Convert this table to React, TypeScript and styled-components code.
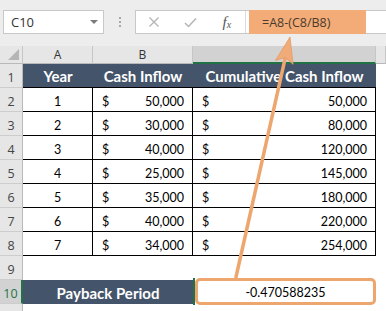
import React from "react";
import styled, { createGlobalStyle } from "styled-components";

const Global = createGlobalStyle`
  html, body { margin: 0; padding: 0; background: #ffffff; }
  body { width: 386px; height: 311px; overflow: hidden; font-family: Lato, "Liberation Sans", sans-serif; }
`;

const Page = styled.div`
  position: relative;
  width: 386px;
  height: 311px;
  overflow: hidden;
  background: #ffffff;
`;

const Toolbar = styled.div`
  height: 46px;
  box-sizing: border-box;
  padding: 10px 0 0 3px;
  display: flex;
  align-items: flex-start;
  background: #ededed;
`;

const NameBox = styled.div`
  width: 101px;
  height: 24px;
  box-sizing: border-box;
  background: #ffffff;
  border: 1px solid #c8c8c8;
  display: flex;
  align-items: center;
  justify-content: space-between;
  padding: 0 5px 0 7px;
  font-family: "Open Sans", sans-serif;
  font-size: 13px;
  color: #333;
`;

const Caret = styled.span`
  width: 0;
  height: 0;
  border-left: 4px solid transparent;
  border-right: 4px solid transparent;
  border-top: 4px solid #7a7a7a;
`;

const Dots = styled.div`
  width: 31px;
  height: 24px;
  display: flex;
  flex-direction: column;
  align-items: center;
  justify-content: center;
  gap: 2px;
  & > span {
    width: 2px;
    height: 2px;
    background: #a8a8a8;
  }
`;

const FormulaBox = styled.div`
  flex: 1;
  height: 24px;
  box-sizing: border-box;
  background: #ffffff;
  border: 1px solid #c8c8c8;
  border-right: none;
  display: flex;
  align-items: stretch;
`;

const IconZone = styled.div`
  width: 109px;
  display: flex;
  align-items: center;
  border-right: 1px solid #dadada;
`;

const IconSlot = styled.div`
  width: 37px;
  display: flex;
  justify-content: center;
  align-items: center;
`;

const Fx = styled.span`
  font-family: "Liberation Serif", serif;
  font-style: italic;
  font-size: 15px;
  color: #555;
  & > sub {
    font-size: 10px;
    vertical-align: -1px;
  }
`;

const InputZone = styled.div`
  flex: 1;
  display: flex;
  align-items: stretch;
  padding: 0 0 0 3px;
`;

const Highlight = styled.div`
  width: 117px;
  margin: -1px 0;
  background: #f3ac77;
  display: flex;
  align-items: center;
  padding-left: 13px;
  box-sizing: border-box;
  font-family: "Open Sans", sans-serif;
  font-size: 12.5px;
  color: #4a3b2e;
`;

const Sheet = styled.div`
  display: grid;
  grid-template-columns: 23px 70px 100px 183px 10px;
  grid-template-rows: 18px repeat(11, 24px);
`;

const Corner = styled.div`
  background: #e6e6e6;
  border-right: 1px solid #c6c6c6;
  border-bottom: 1px solid #b9b9b9;
  box-sizing: border-box;
  position: relative;
  &::after {
    content: "";
    position: absolute;
    right: 3px;
    bottom: 3px;
    width: 0;
    height: 0;
    border-left: 11px solid transparent;
    border-bottom: 11px solid #b5b5b5;
  }
`;

const ColHead = styled.div<{ $sel?: boolean }>`
  background: ${(p) => (p.$sel ? "#d2d2d2" : "#e6e6e6")};
  border-right: 1px solid #c6c6c6;
  border-bottom: ${(p) => (p.$sel ? "2px solid #217346" : "1px solid #b9b9b9")};
  box-sizing: border-box;
  display: flex;
  align-items: center;
  justify-content: center;
  font-family: "Open Sans", sans-serif;
  font-size: 12px;
  color: #333;
`;

const RowHead = styled.div<{ $sel?: boolean }>`
  background: ${(p) => (p.$sel ? "#d2d2d2" : "#e6e6e6")};
  border-bottom: 1px solid #cdcdcd;
  border-right: ${(p) => (p.$sel ? "2px solid #217346" : "1px solid #b9b9b9")};
  box-sizing: border-box;
  display: flex;
  align-items: center;
  justify-content: center;
  padding-top: 3px;
  font-family: "Open Sans", sans-serif;
  font-size: 12.5px;
  color: ${(p) => (p.$sel ? "#217346" : "#444")};
`;

const HeadCell = styled.div<{ $span?: number }>`
  grid-column: span ${(p) => p.$span ?? 1};
  background: #44546a;
  color: #ffffff;
  font-weight: 700;
  font-size: 15px;
  display: flex;
  align-items: center;
  justify-content: center;
  padding-top: 1px;
  box-sizing: border-box;
  white-space: nowrap;
`;

const TitleCell = styled(HeadCell)`
  border-bottom: 1px solid #000;
`;

const Cell = styled.div<{ $align?: "center" | "split" }>`
  border-right: 1px solid #000;
  border-bottom: 1px solid #000;
  box-sizing: border-box;
  display: flex;
  align-items: center;
  justify-content: ${(p) => (p.$align === "split" ? "space-between" : "center")};
  padding: 3px ${(p) => (p.$align === "split" ? "8px 0 9px" : "0 0 0")};
  font-size: 12.5px;
  color: #000;
`;

const Blank = styled.div<{ $span?: number }>`
  grid-column: span ${(p) => p.$span ?? 1};
  background: #ffffff;
`;

const ResultCell = styled.div`
  border-left: 2px solid #217346;
  display: flex;
  align-items: stretch;
  margin-top: -2px;
  margin-bottom: -1px;
  position: relative;
  z-index: 1;
`;

const ResultBox = styled.div`
  flex: 1;
  border: 3px solid #eea66f;
  border-radius: 5px;
  background: #ffffff;
  display: flex;
  align-items: center;
  justify-content: center;
  padding-top: 2px;
  font-size: 12.5px;
  color: #000;
`;

const Overlay = styled.svg`
  position: absolute;
  left: 0;
  top: 0;
  pointer-events: none;
  z-index: 2;
`;

const rows = [
  [1, "50,000", "50,000"],
  [2, "30,000", "80,000"],
  [3, "40,000", "120,000"],
  [4, "25,000", "145,000"],
  [5, "35,000", "180,000"],
  [6, "40,000", "220,000"],
  [7, "34,000", "254,000"],
];

// Arrow geometry
const tip = { x: 290, y: 37 };
const tail = { x: 236, y: 277 };
const len = Math.hypot(tip.x - tail.x, tip.y - tail.y);
const d = { x: (tip.x - tail.x) / len, y: (tip.y - tail.y) / len };
const n = { x: -d.y, y: d.x };
const headLen = 26;
const half = 9;
const base = { x: tip.x - d.x * headLen, y: tip.y - d.y * headLen };
const notch = { x: tip.x - d.x * (headLen - 5), y: tip.y - d.y * (headLen - 5) };
const left = { x: base.x - n.x * half, y: base.y - n.y * half };
const right = { x: base.x + n.x * half, y: base.y + n.y * half };

export default function App() {
  return (
    <Page>
      <Global />
      <Toolbar>
        <NameBox>
          <span>C10</span>
          <Caret />
        </NameBox>
        <Dots>
          <span />
          <span />
          <span />
        </Dots>
        <FormulaBox>
          <IconZone>
            <IconSlot>
              <svg width="12" height="12" viewBox="0 0 12 12">
                <path d="M1.5 1.5 L10.5 10.5 M10.5 1.5 L1.5 10.5" stroke="#b4b4b4" strokeWidth="1.3" fill="none" />
              </svg>
            </IconSlot>
            <IconSlot>
              <svg width="13" height="11" viewBox="0 0 13 11">
                <path d="M1 6 L4.5 9.5 L12 1.5" stroke="#b4b4b4" strokeWidth="1.5" fill="none" />
              </svg>
            </IconSlot>
            <IconSlot>
              <Fx>
                f<sub>x</sub>
              </Fx>
            </IconSlot>
          </IconZone>
          <InputZone>
            <Highlight>=A8-(C8/B8)</Highlight>
          </InputZone>
        </FormulaBox>
      </Toolbar>
      <Sheet>
        <Corner />
        <ColHead>A</ColHead>
        <ColHead>B</ColHead>
        <ColHead $sel>&nbsp;</ColHead>
        <ColHead>&nbsp;</ColHead>

        <RowHead>1</RowHead>
        <TitleCell>Year</TitleCell>
        <TitleCell>Cash Inflow</TitleCell>
        <TitleCell>Cumulative Cash Inflow</TitleCell>
        <Blank />

        {rows.map(([y, b, c], i) => (
          <React.Fragment key={i}>
            <RowHead>{i + 2}</RowHead>
            <Cell>{y}</Cell>
            <Cell $align="split">
              <span>$</span>
              <span>{b}</span>
            </Cell>
            <Cell $align="split">
              <span>$</span>
              <span>{c}</span>
            </Cell>
            <Blank />
          </React.Fragment>
        ))}

        <RowHead>9</RowHead>
        <Blank $span={4} />

        <RowHead $sel>10</RowHead>
        <HeadCell $span={2}>Payback Period</HeadCell>
        <ResultCell>
          <ResultBox>-0.470588235</ResultBox>
        </ResultCell>
        <Blank />

        <RowHead />
        <Blank $span={4} />
      </Sheet>
      <Overlay width="386" height="311" viewBox="0 0 386 311">
        <line
          x1={tail.x}
          y1={tail.y}
          x2={notch.x}
          y2={notch.y}
          stroke="#eea66f"
          strokeWidth="3.5"
          strokeLinecap="round"
        />
        <polygon
          points={`${tip.x},${tip.y} ${right.x},${right.y} ${notch.x},${notch.y} ${left.x},${left.y}`}
          fill="#f1ab78"
          stroke="#e39a63"
          strokeWidth="0.8"
          strokeLinejoin="round"
        />
      </Overlay>
    </Page>
  );
}
